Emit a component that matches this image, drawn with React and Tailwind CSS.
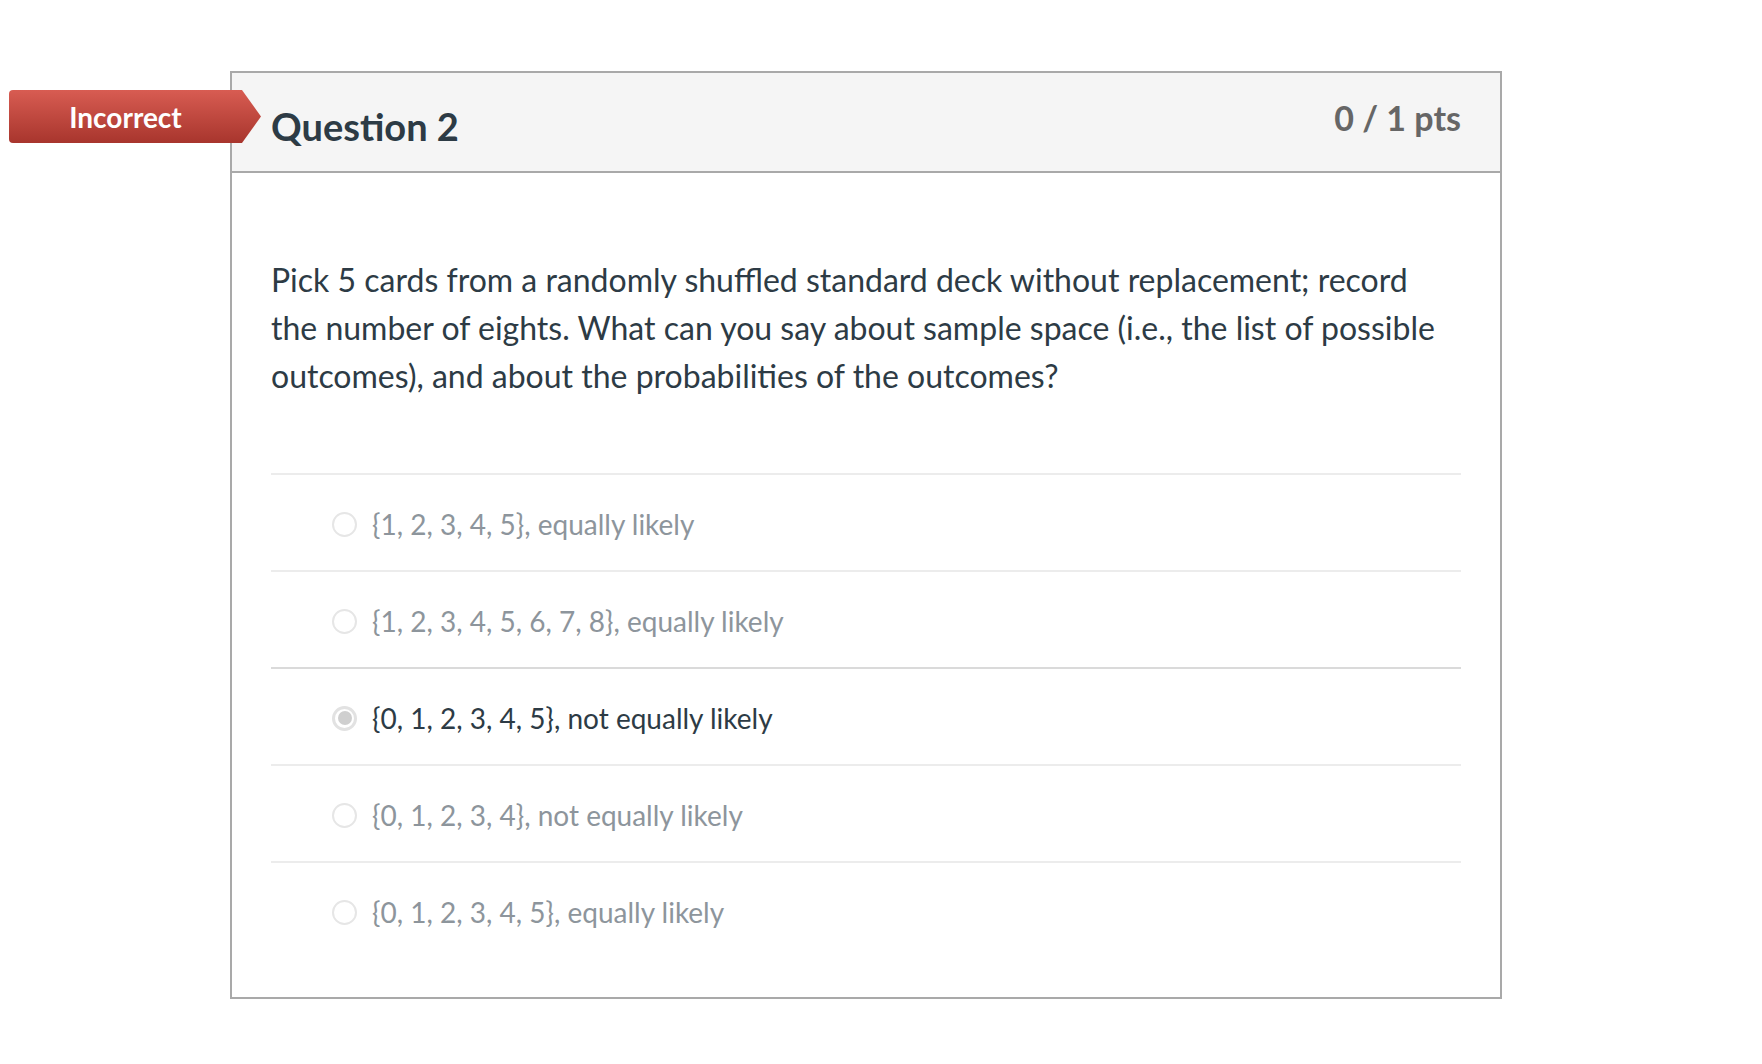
const options = [
  { label: "{1, 2, 3, 4, 5}, equally likely", selected: false },
  { label: "{1, 2, 3, 4, 5, 6, 7, 8}, equally likely", selected: false },
  { label: "{0, 1, 2, 3, 4, 5}, not equally likely", selected: true },
  { label: "{0, 1, 2, 3, 4}, not equally likely", selected: false },
  { label: "{0, 1, 2, 3, 4, 5}, equally likely", selected: false },
];

function Radio({ selected }) {
  if (selected) {
    return (
      <span className="flex items-center justify-center w-[25px] h-[25px] rounded-full border-[3px] border-[#e2e2e2] bg-white shrink-0">
        <span className="w-[14px] h-[14px] rounded-full bg-[#cfcfcf]" />
      </span>
    );
  }
  return (
    <span className="w-[25px] h-[25px] rounded-full border-2 border-[#e6e6e6] bg-white shrink-0" />
  );
}

export default function App() {
  return (
    <div className="relative min-h-[1064px] bg-white font-['Lato','Open_Sans',sans-serif] pt-[71px] pl-[230px]">
      {/* incorrect badge */}
      <div className="absolute left-[9px] top-[90px] flex h-[53px]">
        <div className="w-[233px] rounded-l-[4px] bg-linear-to-b from-[#d85c52] to-[#a8352d] flex items-center justify-center">
          <span className="text-white font-bold text-[28px] leading-none">
            Incorrect
          </span>
        </div>
        <div className="w-[19px] bg-linear-to-b from-[#d85c52] to-[#a8352d] [clip-path:polygon(0_0,100%_50%,0_100%)]" />
      </div>

      <div className="w-[1272px] border-2 border-[#a9a9a9]">
        <div className="h-[100px] bg-[#f5f5f5] border-b-2 border-[#a9a9a9] flex justify-between items-start px-[39px]">
          <h2 className="pt-[30px] text-[38px] leading-[46px] font-bold text-[#2d3b45]">
            Question 2
          </h2>
          <div className="pt-[24px] text-[34px] leading-[41px] font-bold text-[#666666]">
            0 / 1 pts
          </div>
        </div>

        <div className="px-[39px] pt-[83px] pb-[39px]">
          <p className="text-[32px] leading-[48px] text-[#2d3b45] pr-[10px]">
            Pick 5 cards from a randomly shuffled standard deck without
            replacement; record the number of eights. What can you say about
            sample space (i.e., the list of possible outcomes), and about the
            probabilities of the outcomes?
          </p>

          <div className="mt-[73px]">
            {options.map((o, i) => (
              <div
                key={i}
                className={`h-[97px] flex items-center gap-[15px] pl-[61px] pt-[3px] border-t-2 ${
                  o.selected ? "border-[#dadada]" : "border-[#ececec]"
                }`}
              >
                <Radio selected={o.selected} />
                <span
                  className={`text-[28px] leading-none ${
                    o.selected ? "text-[#2d3b45]" : "text-[#8d959c]"
                  }`}
                >
                  {o.label}
                </span>
              </div>
            ))}
          </div>
        </div>
      </div>
    </div>
  );
}
